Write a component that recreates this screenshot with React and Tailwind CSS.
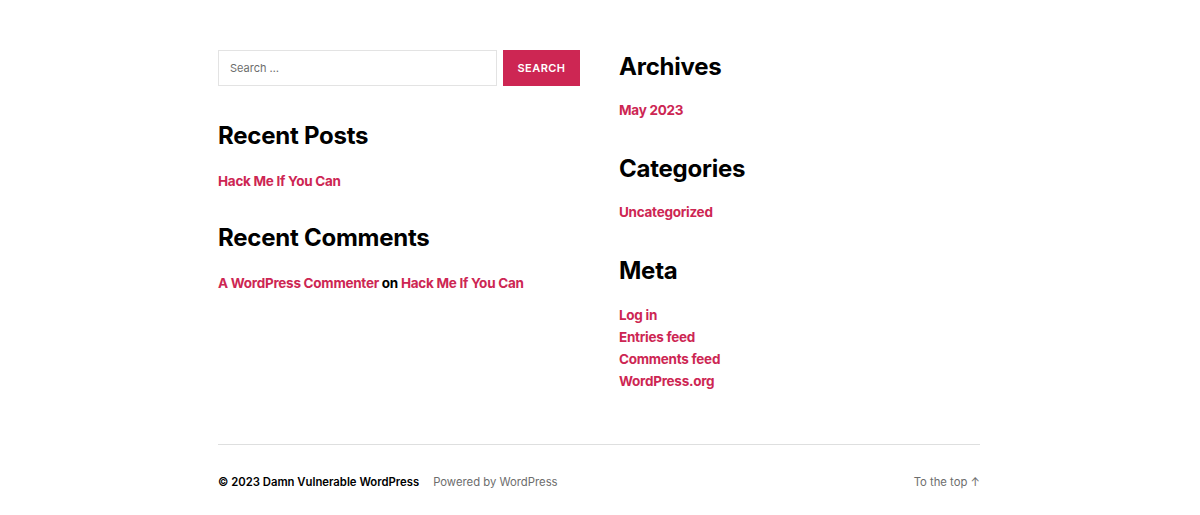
export default function App() {
  const link = "text-[#cd2653] font-bold text-[13.5px] leading-[22px] tracking-[-0.02em]";
  const h = "text-[24px] leading-[32px] font-bold tracking-[-0.01em] text-black";
  return (
    <div className="w-[1200px] h-[515px] bg-white overflow-hidden" style={{ fontFamily: "Inter, 'Liberation Sans', sans-serif" }}>
      <div className="w-[762px] ml-[218px] pt-[50px]">
        <div className="grid grid-cols-[362px_361px] gap-x-[39px]">
          <div className="flex flex-col">
            <form className="flex gap-[6px] h-[36px]">
              <div className="w-[279px] h-[36px] border border-[#e3e3e3] flex items-center pl-[11px] text-[11px] text-[#6d6d6d]">Search …</div>
              <button type="button" className="w-[77px] h-[36px] bg-[#cd2653] text-white text-[11px] font-semibold tracking-[0.04em]">SEARCH</button>
            </form>
            <h2 className={h + " mt-[34px]"}>Recent Posts</h2>
            <div className={link + " mt-[18px]"}>Hack Me If You Can</div>
            <h2 className={h + " mt-[30px]"}>Recent Comments</h2>
            <div className={link + " mt-[18px]"}>
              A WordPress Commenter <span className="text-black">on</span> Hack Me If You Can
            </div>
          </div>
          <div className="flex flex-col">
            <h2 className={h + " mt-[1px]"}>Archives</h2>
            <div className={link + " mt-[16px]"}>May 2023</div>
            <h2 className={h + " mt-[32px]"}>Categories</h2>
            <div className={link + " mt-[16px]"}>Uncategorized</div>
            <h2 className={h + " mt-[32px]"}>Meta</h2>
            <div className="flex flex-col mt-[17px]">
              <div className={link}>Log in</div>
              <div className={link}>Entries feed</div>
              <div className={link}>Comments feed</div>
              <div className={link}>WordPress.org</div>
            </div>
          </div>
        </div>
        <div className="mt-[52px] border-t border-[#dedfdf]"></div>
        <div className="flex items-center justify-between h-[20px] mt-[27px] text-[11.3px]">
          <div className="flex items-center gap-[14px]">
            <span className="font-semibold text-black">© 2023 Damn Vulnerable WordPress</span>
            <span className="text-[#6d6d6d]">Powered by WordPress</span>
          </div>
          <span className="text-[#6d6d6d]">To the top ↑</span>
        </div>
      </div>
    </div>
  );
}
